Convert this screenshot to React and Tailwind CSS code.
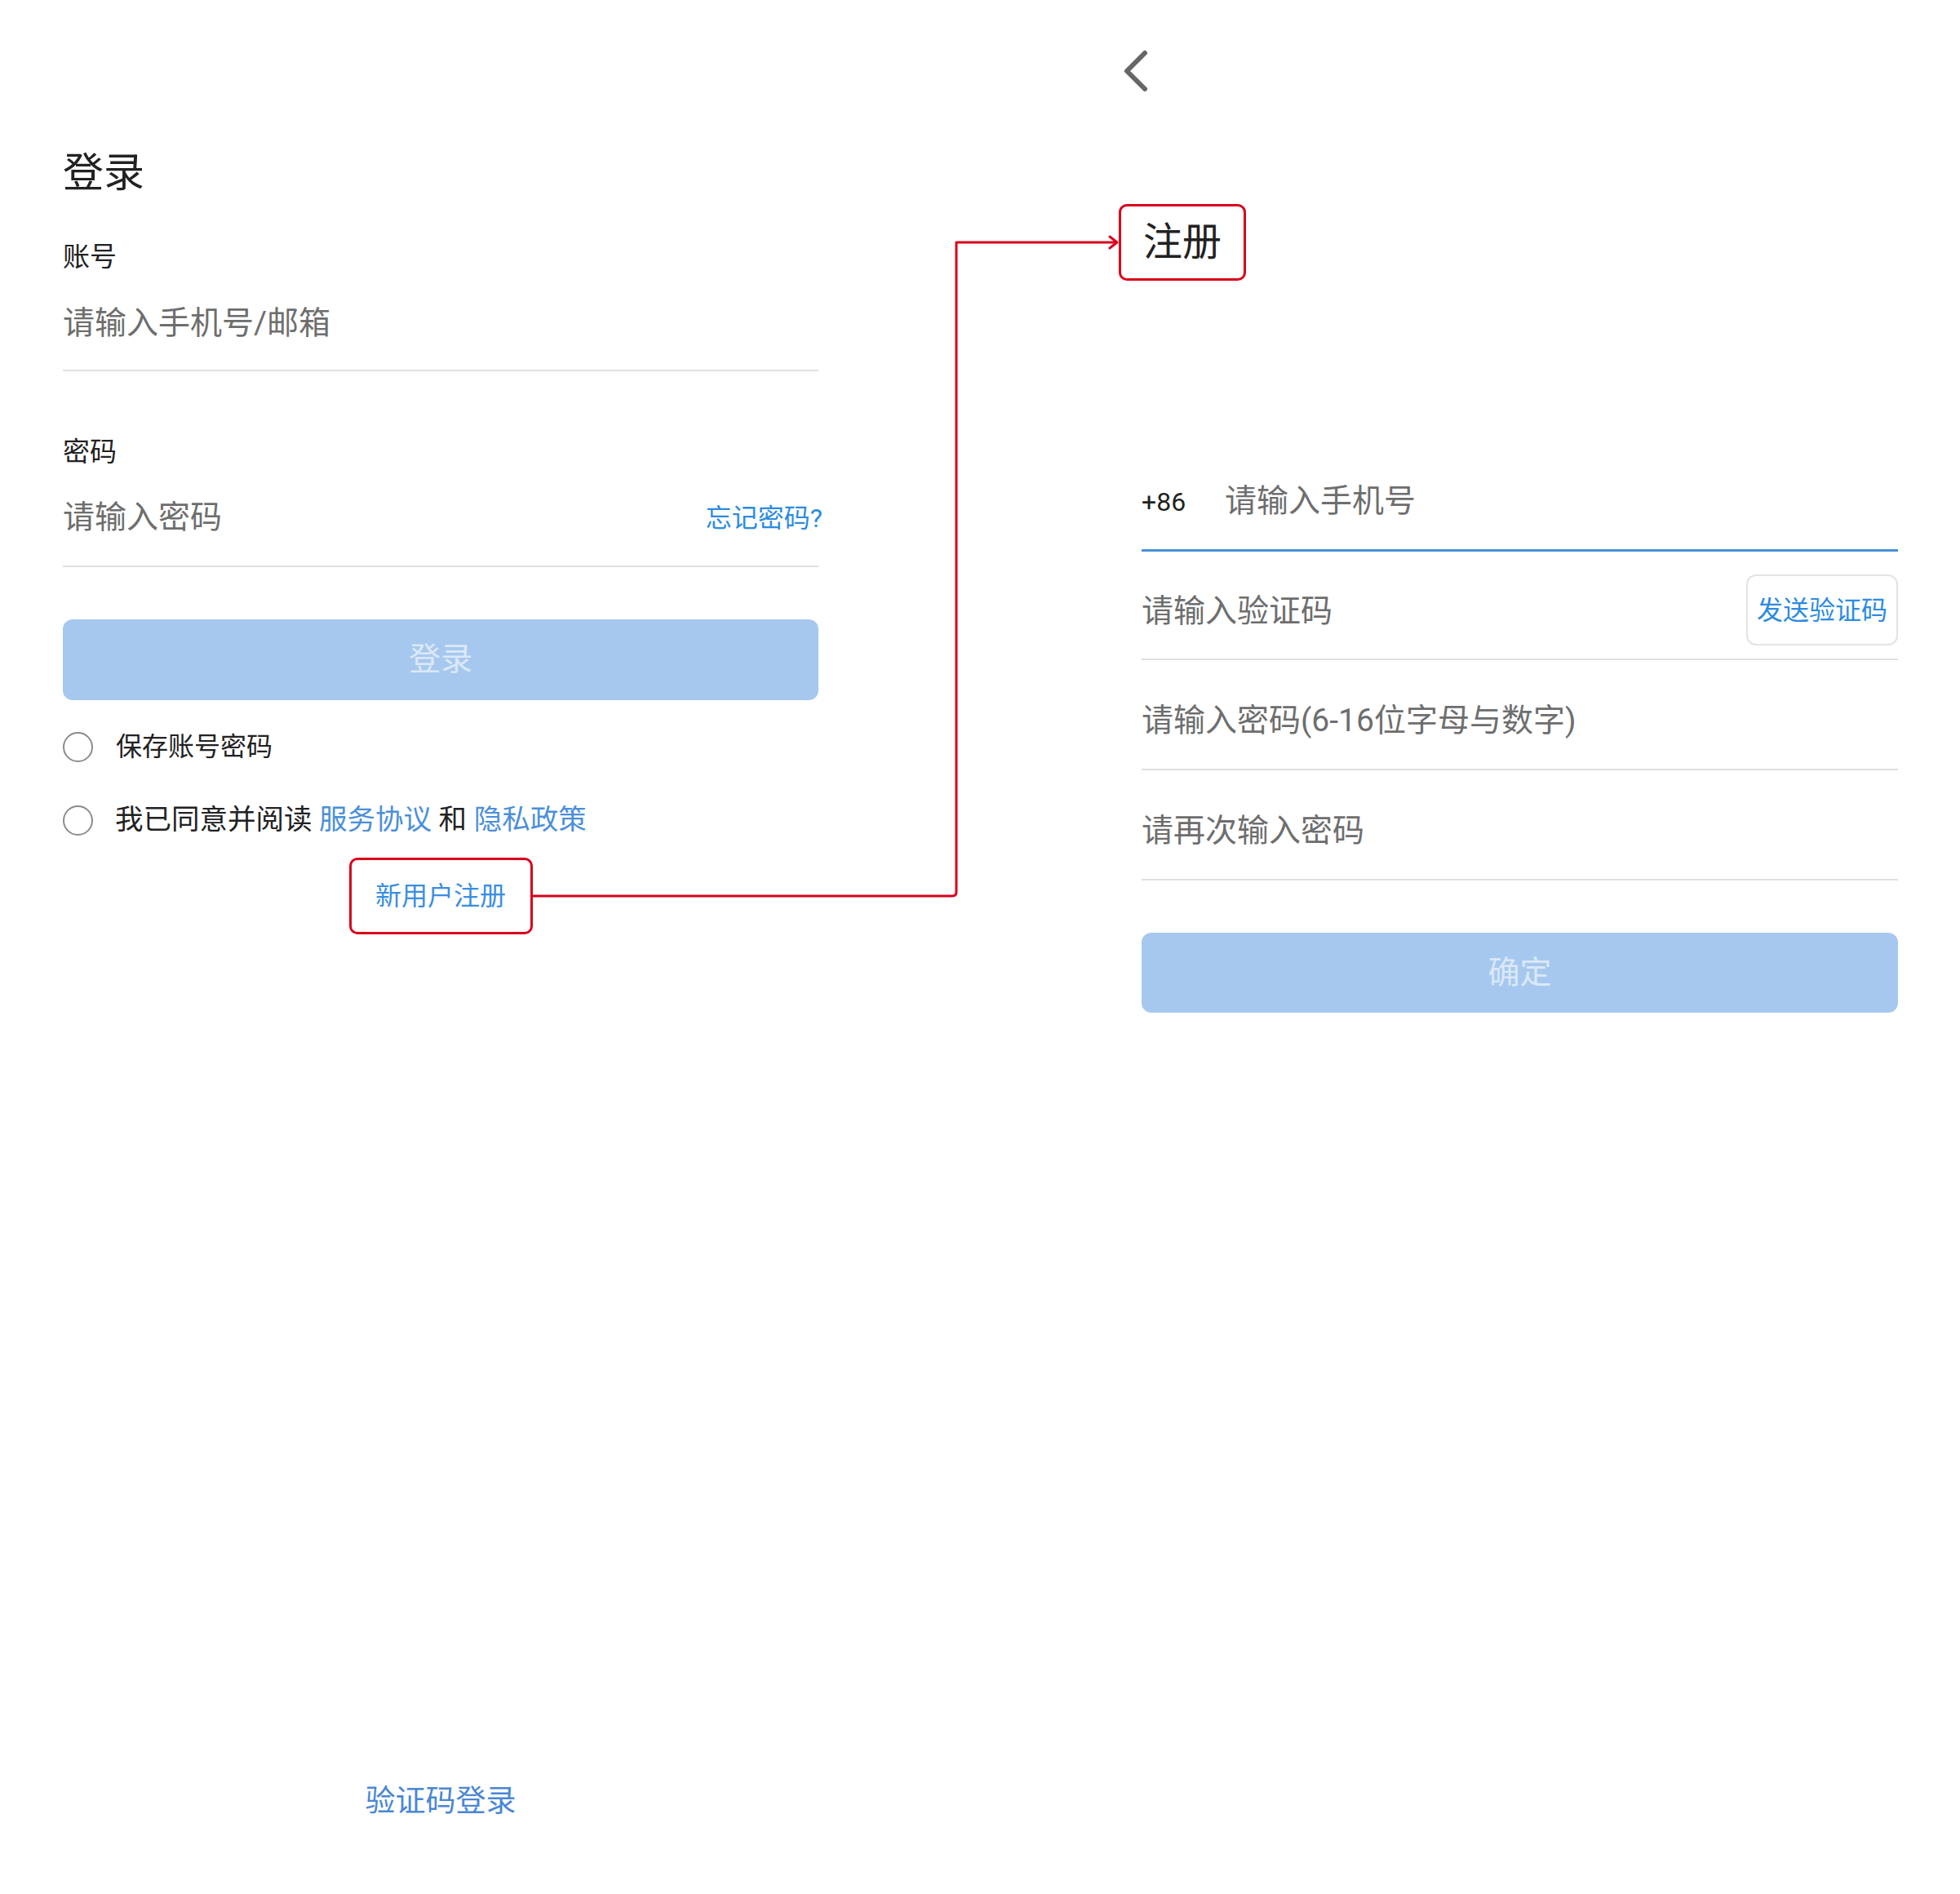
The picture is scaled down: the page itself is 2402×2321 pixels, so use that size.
export default function App() {
  return (
    <div className="relative flex h-[2321px] w-[2402px] bg-white font-['Roboto','Noto_Sans_CJK_SC',sans-serif]">
      {/* Left: login */}
      <div className="ml-[77px] flex w-[926px] flex-col pt-[179px]">
        <div className="h-[66px] text-[50px] leading-[66px] text-[#222]">登录</div>
        <div className="mt-[48px] h-[44px] text-[33px] leading-[44px] text-[#222]">账号</div>
        <div className="flex h-[118px] items-center border-b-2 border-[#e0e0e0] pt-[2px] text-[39px] text-[#6e6e6e]">
          请输入手机号/邮箱
        </div>
        <div className="mt-[77px] h-[44px] text-[33px] leading-[44px] text-[#222]">密码</div>
        <div className="flex h-[119px] items-center justify-between border-b-2 border-[#e0e0e0]">
          <span className="text-[39px] text-[#6e6e6e]">请输入密码</span>
          <span className="-mr-[5px] text-[32px] text-[#2d8be0]">忘记密码?</span>
        </div>
        <div className="mt-[64px] flex h-[99px] items-center justify-center rounded-[12px] bg-[#a6c8ee] text-[39px] text-[#dbe8f8]">
          登录
        </div>
        <div className="mt-[29px] flex h-[56px] items-center gap-[28px]">
          <span className="h-[37px] w-[37px] rounded-full border-2 border-[#8c8c8c]"></span>
          <span className="text-[32px] text-[#222]">保存账号密码</span>
        </div>
        <div className="mt-[34px] flex h-[56px] items-center gap-[27px]">
          <span className="h-[37px] w-[37px] rounded-full border-2 border-[#8c8c8c]"></span>
          <span className="text-[34.5px] text-[#222] whitespace-pre">
            我已同意并阅读 <span className="text-[#4b8fd9]">服务协议</span> 和 <span className="text-[#4b8fd9]">隐私政策</span>
          </span>
        </div>
        <div className="mt-[18px] flex h-[94px] w-[225px] items-center justify-center self-center rounded-[10px] border-[3px] border-[#d9001b] text-[32px] text-[#3a8ee0]">
          新用户注册
        </div>
        <div className="mt-[1038px] h-[50px] self-center text-[37px] leading-[50px] text-[#4a87d4]">验证码登录</div>
      </div>

      {/* Right: register */}
      <div className="ml-[396px] flex w-[927px] flex-col pt-[57px]">
        <svg className="-ml-[29px] h-[60px] w-[48px]" viewBox="0 0 48 60" fill="none">
          <path d="M33 8 L11 30 L33 52" stroke="#666666" strokeWidth="6" strokeLinecap="round" strokeLinejoin="round" />
        </svg>
        <div className="-ml-[28px] mt-[133px] flex h-[94px] w-[156px] items-center justify-center rounded-[10px] border-[3px] border-[#d9001b] text-[48px] text-[#222]">
          注册
        </div>
        <div className="mt-[206px] flex h-[126px] items-center border-b-[3px] border-[#4a90d9] pt-[6px]">
          <span className="w-[102px] text-[32px] text-[#222]">+86</span>
          <span className="text-[39px] text-[#6e6e6e]">请输入手机号</span>
        </div>
        <div className="flex h-[133px] items-center justify-between border-b-2 border-[#e0e0e0] pt-[12px]">
          <span className="pt-[4px] text-[39px] text-[#6e6e6e]">请输入验证码</span>
          <span className="flex h-[87px] w-[186px] items-center justify-center rounded-[12px] border-2 border-[#e3e3e3] text-[32px] text-[#2d8be0]">
            发送验证码
          </span>
        </div>
        <div className="flex h-[135px] items-center border-b-2 border-[#e0e0e0] pt-[15px] text-[39px] text-[#6e6e6e]">
          请输入密码(6-16位字母与数字)
        </div>
        <div className="flex h-[135px] items-center border-b-2 border-[#e0e0e0] pt-[15px] text-[39px] text-[#6e6e6e]">
          请再次输入密码
        </div>
        <div className="mt-[64px] flex h-[98px] items-center justify-center rounded-[12px] bg-[#a6c8ee] text-[39px] text-[#dbe8f8]">
          确定
        </div>
      </div>

      {/* Annotation connector */}
      <svg className="pointer-events-none absolute left-0 top-0 h-[2321px] w-[2402px]" viewBox="0 0 2402 2321" fill="none">
        <path
          d="M652 1098 H1167 Q1172 1098 1172 1093 V297 H1368"
          stroke="#d9001b"
          strokeWidth="3"
          strokeLinejoin="round"
        />
        <path d="M1360 290 L1369 297 L1360 304" stroke="#d9001b" strokeWidth="3" strokeLinecap="round" strokeLinejoin="round" />
      </svg>
    </div>
  );
}
